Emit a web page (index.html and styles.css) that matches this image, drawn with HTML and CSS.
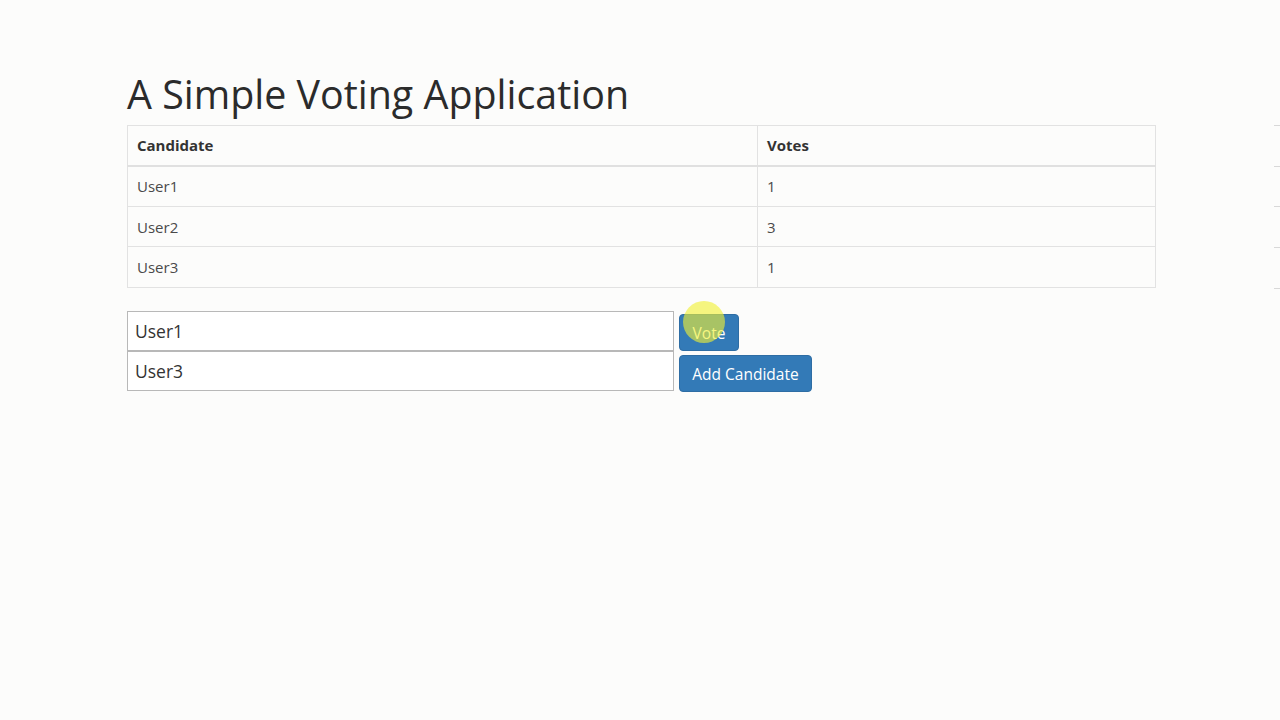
FILE: index.html
```html
<!DOCTYPE html>
<html>
<head>
<meta charset="utf-8">
<title>A Simple Voting Application</title>
<link rel="stylesheet" href="styles.css">
</head>
<body>
<div class="page">
  <main class="main">
    <h1 class="title">A Simple Voting Application</h1>
    <table class="votes">
      <thead>
        <tr><th class="col-name">Candidate</th><th>Votes</th></tr>
      </thead>
      <tbody>
        <tr><td>User1</td><td>1</td></tr>
        <tr><td>User2</td><td>3</td></tr>
        <tr><td>User3</td><td>1</td></tr>
      </tbody>
    </table>
    <div class="forms">
      <div class="form-row">
        <input class="field" type="text" value="User1">
        <div class="btn-wrap">
          <button class="btn btn-vote">Vote</button>
          <span class="cursor-glow"></span>
        </div>
      </div>
      <div class="form-row">
        <input class="field" type="text" value="User3">
        <button class="btn btn-add">Add Candidate</button>
      </div>
    </div>
  </main>
  <aside class="edge">
    <span class="edge-line"></span>
    <span class="edge-line"></span>
    <span class="edge-line"></span>
    <span class="edge-line"></span>
    <span class="edge-line"></span>
  </aside>
</div>
</body>
</html>
```
FILE: styles.css
```css
html, body {
  margin: 0;
  padding: 0;
  background: #fcfcfb;
}
body {
  font-family: "Open Sans", "Liberation Sans", sans-serif;
  color: #333;
  width: 1280px;
  height: 720px;
  overflow: hidden;
}
.page {
  display: flex;
  width: 1280px;
}
.main {
  padding-left: 127px;
  width: 1029px;
}
.title {
  font-size: 39.4px;
  font-weight: 400;
  color: #2b2b2b;
  margin: 70px 0 7px 0;
  line-height: 48px;
  letter-spacing: 0;
}
.votes {
  width: 1029px;
  border-collapse: collapse;
  border: 1px solid #e0e0e0;
  font-size: 15px;
}
.votes th, .votes td {
  border: 1px solid #e2e2e2;
  padding: 0 9px;
  height: 40.7px;
  box-sizing: border-box;
  text-align: left;
  vertical-align: middle;
}
.votes th {
  font-weight: 700;
  color: #333;
  height: 40px;
  border-bottom: 2px solid #e0e0e0;
}
.votes td {
  color: #4a4a4a;
}
.col-name {
  width: 630px;
}
.forms {
  margin-top: 23px;
  display: flex;
  flex-direction: column;
}
.form-row {
  display: flex;
  align-items: flex-end;
  gap: 5px;
}
.field {
  box-sizing: border-box;
  width: 547px;
  height: 40px;
  margin: 0;
  border: 1px solid #b8b8b8;
  border-radius: 0;
  background: #fff;
  padding: 0 7px;
  font-family: "Open Sans", "Liberation Sans", sans-serif;
  font-size: 17.5px;
  color: #333;
}
.btn-wrap {
  position: relative;
  display: flex;
}
.btn {
  box-sizing: border-box;
  height: 37px;
  border: 1px solid #2e6da4;
  border-radius: 4px;
  background: #337ab7;
  color: #fff;
  font-family: "Open Sans", "Liberation Sans", sans-serif;
  font-size: 15.5px;
  padding: 0;
  margin-bottom: 0;
}
.btn-vote {
  width: 60px;
}
.btn-add {
  width: 133px;
  margin-bottom: -1px;
}
.cursor-glow {
  position: absolute;
  left: 4px;
  top: -13px;
  width: 42px;
  height: 42px;
  border-radius: 50%;
  background: rgba(240, 240, 50, 0.62);
  pointer-events: none;
}
.edge {
  margin-left: auto;
  width: 6px;
  padding-top: 125px;
  display: flex;
  flex-direction: column;
  gap: 39.7px;
}
.edge-line {
  display: block;
  height: 1px;
  background: #d8d8d8;
}
```
